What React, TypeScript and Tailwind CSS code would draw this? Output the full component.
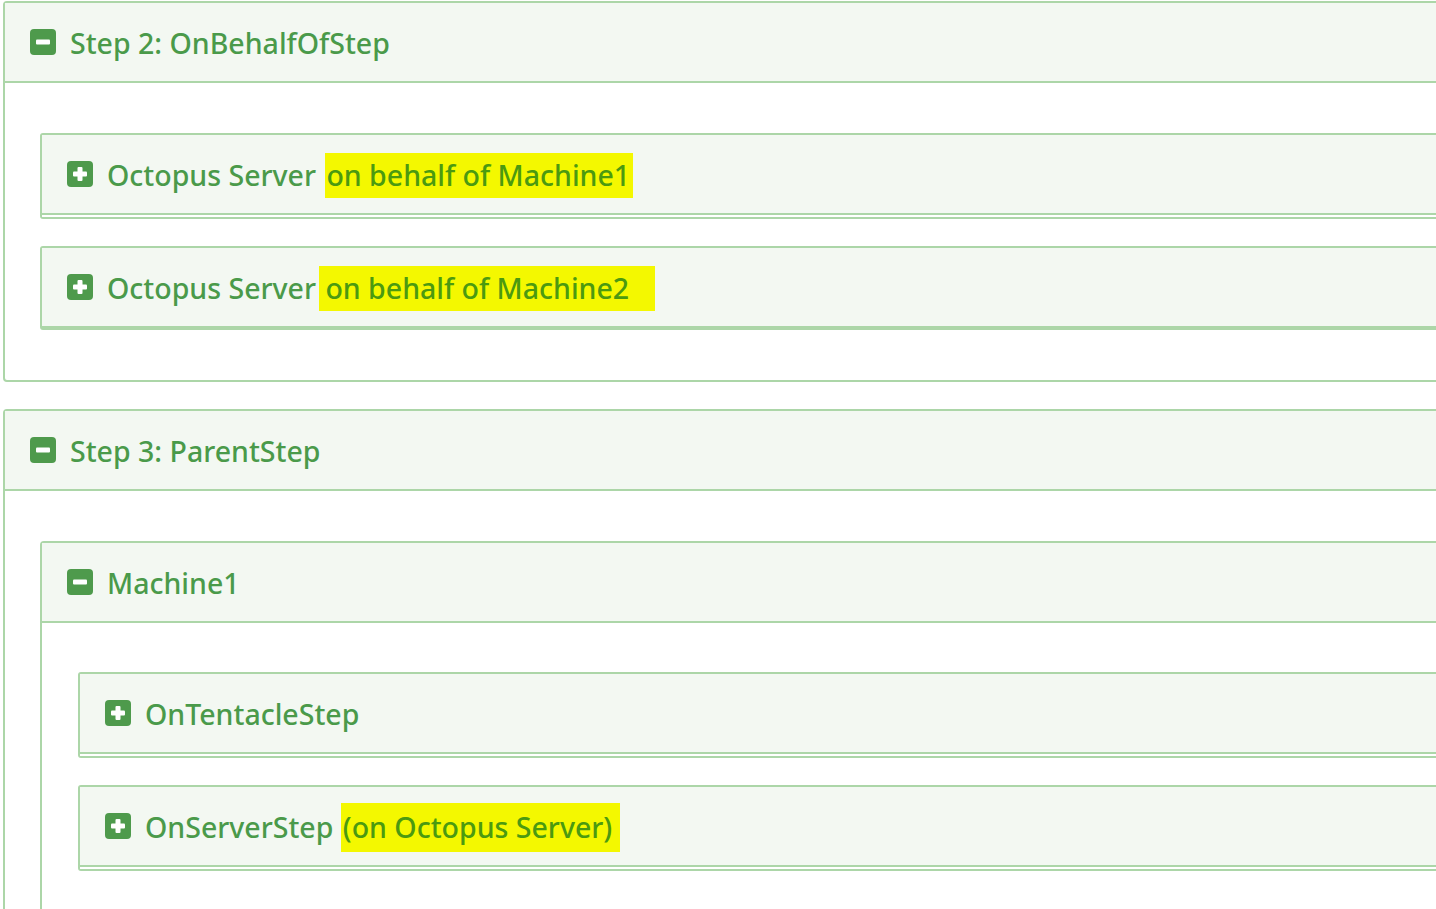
import React from "react";

const font = { fontFamily: '"Noto Sans", "Open Sans", sans-serif' };

function Icon({ open }: { open: boolean }) {
  return (
    <svg width="26" height="26" viewBox="0 0 26 26" className="shrink-0">
      <rect x="0" y="0" width="26" height="26" rx="4" fill="#4e9a4c" />
      <rect x="6" y="10.5" width="14" height="5" rx="1" fill="#ffffff" />
      {!open && <rect x="10.5" y="6" width="5" height="14" rx="1" fill="#ffffff" />}
    </svg>
  );
}

function Hl({ children, cls }: { children: React.ReactNode; cls: string }) {
  return (
    <span className={`inline-block bg-[#f4f800] text-[#4b9a10] ${cls}`}>{children}</span>
  );
}

function Header({ open, children }: { open: boolean; children: React.ReactNode }) {
  return (
    <div className="flex h-[80px] items-center gap-[14px] border-b-2 border-[#acd6a8] bg-[#f3f8f2] pl-[25px]">
      <Icon open={open} />
      <div className="whitespace-nowrap pt-[3px] text-[28.5px] font-medium leading-none text-[#4a9a4a]">
        {children}
      </div>
    </div>
  );
}

function Collapsed({ children, body }: { children: React.ReactNode; body: string }) {
  return (
    <div className="rounded-[3px] border-2 border-[#acd6a8] bg-[#f3f8f2]">
      <Header open={false}>{children}</Header>
      <div className={`${body} bg-white`} />
    </div>
  );
}

export default function App() {
  return (
    <div className="h-[909px] w-[1436px] overflow-hidden bg-white" style={font}>
      <div className="w-[1600px] pl-[3px] pt-[1px]">
        {/* Step 2 */}
        <div className="rounded-[4px] border-2 border-[#acd6a8] bg-white">
          <Header open={true}>Step 2: OnBehalfOfStep</Header>
          <div className="flex flex-col gap-[27px] pb-[50px] pl-[35px] pt-[50px]">
            <Collapsed body="h-[2px]">
              Octopus Server{" "}
              <Hl cls="ml-[2px] pl-[1px] pr-[3px] py-[8px] -my-[8px]">on behalf of Machine1</Hl>
            </Collapsed>
            <Collapsed body="h-0">
              Octopus Server{" "}
              <Hl cls="-ml-[4px] pl-[6px] pr-[26px] py-[8px] -my-[8px]">on behalf of Machine2</Hl>
            </Collapsed>
          </div>
        </div>

        {/* Step 3 */}
        <div className="mt-[27px] rounded-[4px] border-2 border-[#acd6a8] bg-white">
          <Header open={true}>Step 3: ParentStep</Header>
          <div className="pl-[35px] pt-[50px]">
            <div className="rounded-[4px] border-2 border-[#acd6a8] bg-white">
              <Header open={true}>Machine1</Header>
              <div className="flex flex-col gap-[27px] pb-[60px] pl-[36px] pt-[49px]">
                <Collapsed body="h-[2px]">OnTentacleStep</Collapsed>
                <Collapsed body="h-[2px]">
                  OnServerStep{" "}
                  <Hl cls="ml-0 pl-[2px] pr-[8px] py-[10px] -my-[10px]">(on Octopus Server)</Hl>
                </Collapsed>
              </div>
            </div>
          </div>
        </div>
      </div>
    </div>
  );
}
